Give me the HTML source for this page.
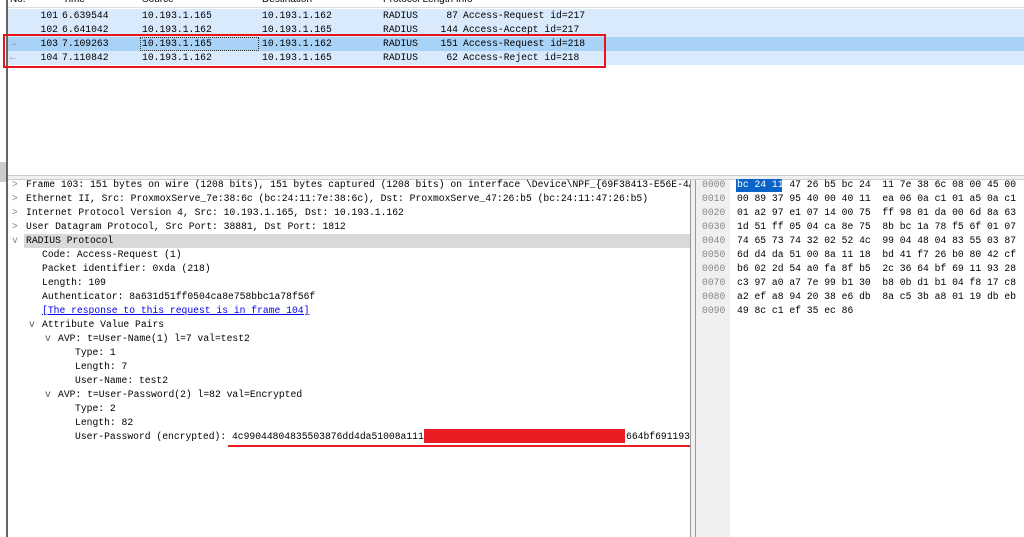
<!DOCTYPE html>
<html><head><meta charset="utf-8"><style>
*{margin:0;padding:0;box-sizing:border-box}
body{width:1024px;height:537px;background:#fff;position:relative;overflow:hidden;font-family:"Liberation Mono",monospace;font-size:9.7px;color:#000}
.a{position:absolute;white-space:pre;line-height:14px}
.r{text-align:right}
.ss{font-family:"Liberation Sans",sans-serif;font-size:10px}
</style></head><body>
<div style="position:absolute;left:6px;top:0;width:2px;height:537px;background:#666"></div>
<div style="position:absolute;left:0;top:162px;width:6px;height:20px;background:#ccc"></div>
<div style="position:absolute;left:8px;top:0;width:1016px;height:8px;background:#fff;border-bottom:1px solid #ddd"></div>
<div class="a ss" style="left:10px;top:-7px">No.</div>
<div class="a ss" style="left:63px;top:-7px">Time</div>
<div class="a ss" style="left:142px;top:-7px">Source</div>
<div class="a ss" style="left:262px;top:-7px">Destination</div>
<div class="a ss" style="left:383px;top:-7px">Protocol Length Info</div>
<div style="position:absolute;left:8px;top:9px;width:1016px;height:28px;background:#daeafd"></div>
<div style="position:absolute;left:8px;top:37px;width:1016px;height:14px;background:#a9d2f7"></div>
<div style="position:absolute;left:8px;top:51px;width:1016px;height:14px;background:#daeafd"></div>
<div style="position:absolute;left:140px;top:37px;width:119px;height:14px;border:1px dotted #333"></div>
<div class="a r" style="left:20px;width:38px;top:9px">101
102
103
104</div>
<div class="a" style="left:62px;top:9px">6.639544
6.641042
7.109263
7.110842</div>
<div class="a" style="left:142px;top:9px">10.193.1.165
10.193.1.162
10.193.1.165
10.193.1.162</div>
<div class="a" style="left:262px;top:9px">10.193.1.162
10.193.1.165
10.193.1.162
10.193.1.165</div>
<div class="a" style="left:383px;top:9px">RADIUS
RADIUS
RADIUS
RADIUS</div>
<div class="a r" style="left:420px;width:38px;top:9px">87
144
151
62</div>
<div class="a" style="left:463px;top:9px">Access-Request id=217
Access-Accept id=217
Access-Request id=218
Access-Reject id=218</div>
<div class="a" style="left:10px;top:37px;color:#888">→</div>
<div class="a" style="left:10px;top:51px;color:#888">←</div>
<div style="position:absolute;left:3px;top:34px;width:603px;height:34px;border:2px solid #e8141c"></div>
<div style="position:absolute;left:8px;top:175px;width:1016px;height:5px;background:#f0f0f0;border-top:1px solid #ccc;border-bottom:1px solid #ccc"></div>
<div style="position:absolute;left:24px;top:234px;width:666px;height:14px;background:#d9d9d9"></div>
<div class="a" style="left:12px;top:178px;color:#888">&gt;
&gt;
&gt;
&gt;
v</div>
<div class="a" style="left:26px;top:178px">Frame 103: 151 bytes on wire (1208 bits), 151 bytes captured (1208 bits) on interface \Device\NPF_{69F38413-E56E-4AF
Ethernet II, Src: ProxmoxServe_7e:38:6c (bc:24:11:7e:38:6c), Dst: ProxmoxServe_47:26:b5 (bc:24:11:47:26:b5)
Internet Protocol Version 4, Src: 10.193.1.165, Dst: 10.193.1.162
User Datagram Protocol, Src Port: 38881, Dst Port: 1812
RADIUS Protocol</div>
<div class="a" style="left:42px;top:248px">Code: Access-Request (1)
Packet identifier: 0xda (218)
Length: 109
Authenticator: 8a631d51ff0504ca8e758bbc1a78f56f
<span style="color:#00e;text-decoration:underline">[The response to this request is in frame 104]</span>
Attribute Value Pairs</div>
<div class="a" style="left:58px;top:332px">AVP: t=User-Name(1) l=7 val=test2</div>
<div class="a" style="left:75px;top:346px">Type: 1
Length: 7
User-Name: test2</div>
<div class="a" style="left:58px;top:388px">AVP: t=User-Password(2) l=82 val=Encrypted</div>
<div class="a" style="left:75px;top:402px">Type: 2
Length: 82
User-Password (encrypted): 4c99044804835503876dd4da51008a1118</div>
<div class="a" style="left:626px;top:430px">664bf6911932</div>
<div class="a" style="left:29px;top:318px;color:#555">v</div>
<div class="a" style="left:45px;top:332px;color:#555">v</div>
<div class="a" style="left:45px;top:388px;color:#555">v</div>
<div style="position:absolute;left:424px;top:429px;width:201px;height:14px;background:#ec1c24"></div>
<div style="position:absolute;left:228px;top:445px;width:462px;height:2px;background:#ec1c24"></div>
<div style="position:absolute;left:690px;top:180px;width:6px;height:357px;background:#f0f0f0;border-left:1px solid #999;border-right:1px solid #999"></div>
<div style="position:absolute;left:696px;top:180px;width:34px;height:357px;background:#f0f0f0"></div>
<div class="a" style="left:702px;top:178px;color:#888">0000
0010
0020
0030
0040
0050
0060
0070
0080
0090</div>
<div style="position:absolute;left:736px;top:179px;width:46px;height:13px;background:#0a64c8"></div>
<div class="a" style="left:737px;top:178px"><span style="color:#fff">bc 24 11</span> 47 26 b5 bc 24  11 7e 38 6c 08 00 45 00
00 89 37 95 40 00 40 11  ea 06 0a c1 01 a5 0a c1
01 a2 97 e1 07 14 00 75  ff 98 01 da 00 6d 8a 63
1d 51 ff 05 04 ca 8e 75  8b bc 1a 78 f5 6f 01 07
74 65 73 74 32 02 52 4c  99 04 48 04 83 55 03 87
6d d4 da 51 00 8a 11 18  bd 41 f7 26 b0 80 42 cf
b6 02 2d 54 a0 fa 8f b5  2c 36 64 bf 69 11 93 28
c3 97 a0 a7 7e 99 b1 30  b8 0b d1 b1 04 f8 17 c8
a2 ef a8 94 20 38 e6 db  8a c5 3b a8 01 19 db eb
49 8c c1 ef 35 ec 86</div>
</body></html>
